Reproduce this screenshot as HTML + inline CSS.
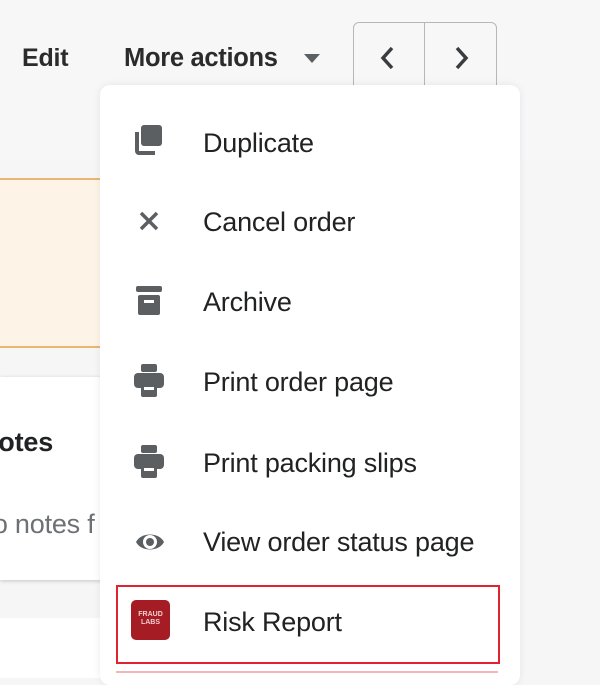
<!DOCTYPE html>
<html><head><style>
body{margin:0;width:600px;height:673px;overflow:hidden;background:#f6f6f7;font-family:"Liberation Sans",sans-serif;position:relative;color:#202223}
.a{position:absolute}
.t{position:absolute;font-size:27px;line-height:30px;white-space:nowrap;letter-spacing:-0.2px}
</style></head><body>
<div class="a" style="left:0;top:0;width:600px;height:160px;background:#f7f7f8"></div>
<div class="t" style="left:22px;top:43px;font-weight:bold;font-size:25px;color:#2b2b2b">Edit</div>
<div class="t" style="left:124px;top:43px;font-weight:bold;font-size:25.5px;color:#2b2b2b;letter-spacing:-0.3px">More actions</div>
<div class="a" style="left:304px;top:54px;width:0;height:0;border-left:8px solid transparent;border-right:8px solid transparent;border-top:9px solid #5c5f62"></div>
<div class="a" style="left:353px;top:22px;width:142px;height:80px;border:1px solid #b5b7ba;border-radius:6px;background:#f7f7f8"></div>
<div class="a" style="left:424px;top:22px;width:1px;height:80px;background:#b5b7ba"></div>
<svg class="a" style="left:375px;top:44px" width="26" height="28"><path d="M17 4L8 14L17 24" fill="none" stroke="#3a3d40" stroke-width="3.5"/></svg>
<svg class="a" style="left:448px;top:44px" width="26" height="28"><path d="M9 4L18 14L9 24" fill="none" stroke="#3a3d40" stroke-width="3.5"/></svg>
<div class="a" style="left:0;top:178px;width:110px;height:166px;background:#fdf4e7;border-top:2px solid #eab670;border-bottom:2px solid #eab670"></div>
<div class="a" style="left:0;top:377px;width:110px;height:203px;background:#fff;box-shadow:0 1px 4px rgba(0,0,0,.2)"></div>
<div class="t" style="left:-18px;top:427px;font-weight:bold;font-size:27px">notes</div>
<div class="t" style="left:-22px;top:509px;color:#6d7175">no notes f</div>
<div class="a" style="left:0;top:618px;width:110px;height:60px;background:#fff"></div>
<div class="a" style="left:100px;top:85px;width:420px;height:600px;background:#fff;border-radius:10px;box-shadow:0 0 8px rgba(0,0,0,.08)"></div>
<svg class="a" style="left:133px;top:125px" width="34" height="34"><rect x="8" y="0" width="21" height="21" rx="3" fill="#5c5f62"/><path d="M4 7V26a2 2 0 0 0 2 2H22" fill="none" stroke="#5c5f62" stroke-width="4"/></svg>
<svg class="a" style="left:138px;top:210px" width="24" height="24"><path d="M3 3L19 19M19 3L3 19" stroke="#5c5f62" stroke-width="3.5"/></svg>
<svg class="a" style="left:136px;top:286px" width="28" height="32"><rect x="0" y="0" width="26" height="6" rx="2" fill="#5c5f62"/><rect x="2" y="9" width="22" height="20" rx="2" fill="#5c5f62"/><rect x="8" y="14" width="10" height="3" fill="#fff"/></svg>
<svg class="a" style="left:134px;top:364px" width="32" height="34"><rect x="7" y="0" width="16" height="8" rx="2" fill="#5c5f62"/><rect x="0" y="9" width="30" height="15" rx="4" fill="#5c5f62"/><rect x="7" y="21" width="16" height="12" rx="2" fill="#5c5f62"/><rect x="10" y="23" width="10" height="3" fill="#fff"/></svg>
<svg class="a" style="left:134px;top:445px" width="32" height="34"><rect x="7" y="0" width="16" height="8" rx="2" fill="#5c5f62"/><rect x="0" y="9" width="30" height="15" rx="4" fill="#5c5f62"/><rect x="7" y="21" width="16" height="12" rx="2" fill="#5c5f62"/><rect x="10" y="23" width="10" height="3" fill="#fff"/></svg>
<svg class="a" style="left:134px;top:529px" width="32" height="26"><path d="M2 13C7 3 25 3 30 13C25 23 7 23 2 13Z" fill="#5c5f62"/><circle cx="16" cy="13" r="7" fill="#fff"/><circle cx="16" cy="13" r="4" fill="#5c5f62"/></svg>
<div class="t" style="left:203px;top:128px">Duplicate</div>
<div class="t" style="left:203px;top:207px">Cancel order</div>
<div class="t" style="left:203px;top:287px">Archive</div>
<div class="t" style="left:203px;top:367px">Print order page</div>
<div class="t" style="left:203px;top:448px">Print packing slips</div>
<div class="t" style="left:203px;top:527px">View order status page</div>
<div class="a" style="left:116px;top:585px;width:380px;height:75px;border:2px solid #e0232e"></div>
<div class="a" style="left:131px;top:600px;width:39px;height:40px;background:#a51c24;border-radius:5px;color:#f0d0d0;font-size:7px;line-height:8px;text-align:center;padding-top:11px;box-sizing:border-box;font-weight:bold">FRAUD<br>LABS</div>
<div class="t" style="left:203px;top:607px">Risk Report</div>
<div class="a" style="left:116px;top:671px;width:382px;height:2px;background:#f3b6b9"></div>
</body></html>
